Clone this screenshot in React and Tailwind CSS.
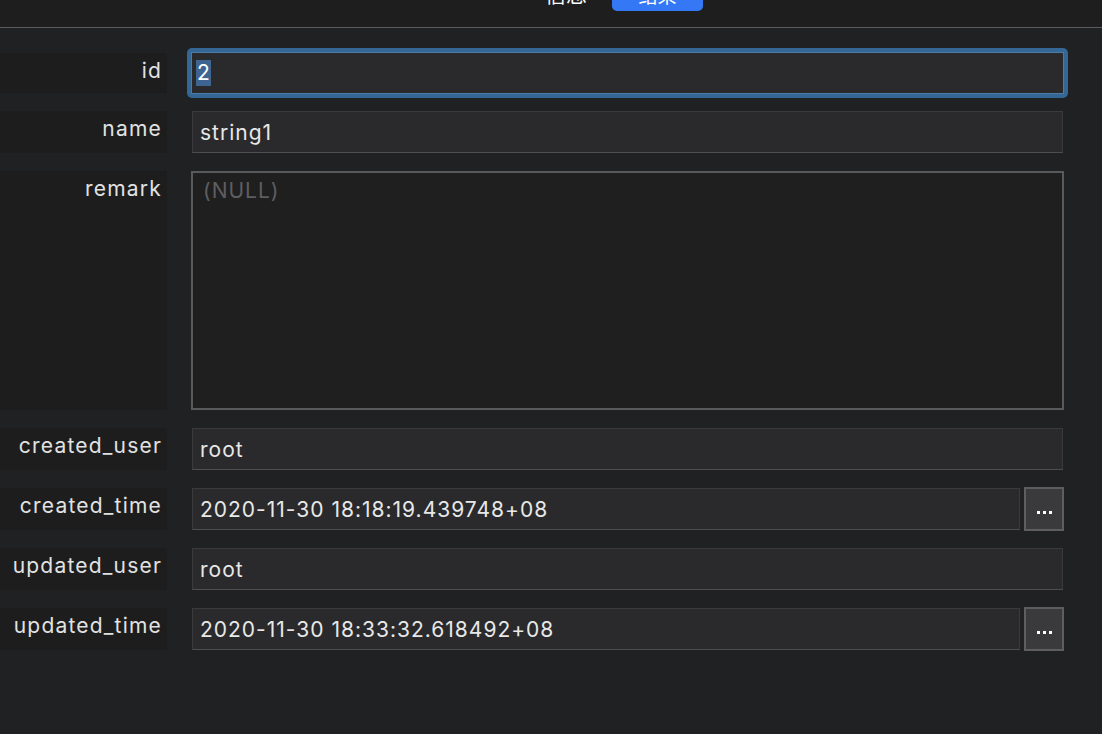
import React from 'react';

const font = { fontFamily: 'Inter, "Noto Sans CJK SC", sans-serif' };

function Label({ children }) {
  return (
    <div className="w-[167px] shrink-0 bg-[#1d1d1e] flex justify-end pr-[5px] pt-[6px]">
      <span className="text-[21px] leading-6 tracking-[1.2px] text-[#e2e2e2]">{children}</span>
    </div>
  );
}

function Field({ value }) {
  return (
    <div className="flex-1 h-[42px] bg-[#2a2a2c] border border-[#3a3a3c] border-b-[#4e4e50] flex items-center pl-[7px] pt-[1px] text-[21px] tracking-[1px] text-[#e8e8e8]">
      {value}
    </div>
  );
}

function MoreButton() {
  return (
    <div className="w-[40px] h-[44px] -my-[1px] ml-[4px] -mr-[1px] bg-[#3a3a3c] border-2 border-[#5e5e60] flex items-center justify-center gap-[3px] pt-[6px]">
      <span className="w-[3px] h-[3px] bg-white" />
      <span className="w-[3px] h-[3px] bg-white" />
      <span className="w-[3px] h-[3px] bg-white" />
    </div>
  );
}

function Row({ label, value, more }) {
  return (
    <div className="flex">
      <Label>{label}</Label>
      <div className="flex flex-1 ml-[25px] mr-[39px]">
        <Field value={value} />
        {more && <MoreButton />}
      </div>
    </div>
  );
}

export default function App() {
  return (
    <div className="w-[1102px] h-[734px] bg-[#202123] overflow-hidden" style={font}>
      {/* top bar */}
      <div className="h-[28px] bg-[#1e1e1f] border-b border-[#5c5c5e] relative overflow-hidden">
        <div className="absolute left-[545px] -top-[16px] flex items-start">
          <span className="text-[21px] leading-[22px] text-white">信息</span>
          <div className="ml-[25px] w-[91px] h-[27px] rounded-[5px] bg-[#3478f6] flex items-center justify-center text-white text-[19px]">
            结果
          </div>
        </div>
      </div>

      <div className="flex flex-col gap-[18px] pt-[25px]">
        {/* id, focused */}
        <div className="flex">
          <Label>id</Label>
          <div className="flex-1 ml-[20px] mr-[34px] -my-[5px] rounded-[5px] bg-[#356796] p-[4px]">
            <div className="h-[42px] bg-[#2a2a2c] border border-[#4d7aa6] flex items-center pl-[4px] text-[21px] text-white">
              <span className="bg-[#3d6590] px-[1px] leading-[26px]">2</span>
            </div>
          </div>
        </div>

        <Row label="name" value="string1" />

        {/* remark textarea */}
        <div className="flex">
          <Label>remark</Label>
          <div className="flex-1 ml-[24px] mr-[38px] h-[239px] bg-[#1f1f20] border-2 border-[#5a5a5c] pl-[10px] pt-[2px] text-[21px] tracking-[1px] text-[#5e5e60]">
            (NULL)
          </div>
        </div>

        <Row label="created_user" value="root" />
        <Row label="created_time" value="2020-11-30 18:18:19.439748+08" more />
        <Row label="updated_user" value="root" />
        <Row label="updated_time" value="2020-11-30 18:33:32.618492+08" more />
      </div>
    </div>
  );
}
